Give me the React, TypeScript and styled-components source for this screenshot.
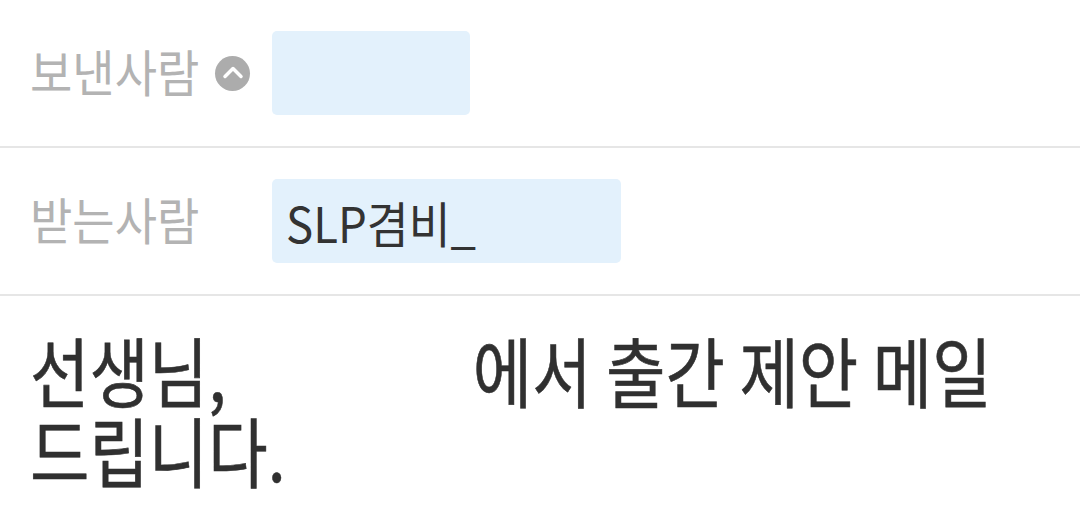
import React from "react";
import styled, { createGlobalStyle } from "styled-components";

const Global = createGlobalStyle`
  html, body { margin: 0; padding: 0; background: #ffffff; }
  body { font-family: "Noto Sans CJK KR", "Noto Sans", sans-serif; }
  #root { width: 1080px; height: 514px; overflow: hidden; }
`;

const Page = styled.div`
  width: 1080px;
  height: 514px;
  display: flex;
  flex-direction: column;
  background: #fff;
  overflow: hidden;
`;

const FieldRow = styled.div`
  height: 146px;
  display: grid;
  grid-template-columns: 242px auto;
  align-items: center;
  padding-left: 30px;
  border-bottom: 2px solid #e6e6e6;
`;

const LabelCell = styled.div`
  display: flex;
  align-items: center;
  gap: 1px;
`;

const Label = styled.span`
  display: inline-block;
  font-size: 50px;
  line-height: 1;
  color: #b3b3b3;
  white-space: nowrap;
  transform: scaleX(0.92);
  transform-origin: left center;
  margin-top: -6px;
`;

const ToggleIcon = styled.span`
  flex: none;
  width: 35px;
  height: 35px;
  border-radius: 50%;
  background: #acacac;
  display: inline-flex;
  align-items: center;
  justify-content: center;
`;

const InputBox = styled.div<{ $w: number }>`
  width: ${(p) => p.$w}px;
  height: 84px;
  border-radius: 5px;
  background: #e3f1fc;
  display: flex;
  align-items: center;
  padding-left: 14px;
  box-sizing: border-box;
`;

const InputText = styled.span`
  display: inline-block;
  font-size: 49px;
  line-height: 1;
  color: #333333;
  white-space: nowrap;
  transform: scaleX(0.93);
  transform-origin: left center;
`;

const Body = styled.div`
  padding: 33px 0 0 30px;
`;

const HeadLine = styled.p`
  margin: 0;
  width: 1180px;
  font-size: 76px;
  font-weight: 400;
  line-height: 80px;
  color: #303030;
  -webkit-text-stroke: 0.6px #303030;
  transform: scaleX(0.85);
  transform-origin: left top;
`;

const Redacted = styled.span`
  display: inline-block;
  width: 290px;
`;

export default function App() {
  return (
    <>
      <Global />
      <Page>
        <FieldRow>
          <LabelCell>
            <Label>보낸사람</Label>
            <ToggleIcon>
              <svg width="24" height="24" viewBox="0 0 24 24" fill="none">
                <path
                  d="M4 15.5 L12 7.5 L20 15.5"
                  stroke="#ffffff"
                  strokeWidth="3.5"
                  strokeLinecap="round"
                  strokeLinejoin="round"
                />
              </svg>
            </ToggleIcon>
          </LabelCell>
          <InputBox $w={198} />
        </FieldRow>
        <FieldRow>
          <LabelCell>
            <Label>받는사람</Label>
          </LabelCell>
          <InputBox $w={349}>
            <InputText>SLP겸비_</InputText>
          </InputBox>
        </FieldRow>
        <Body>
          <HeadLine>
            선생님,<Redacted />에서 출간 제안 메일 드립니다.
          </HeadLine>
        </Body>
      </Page>
    </>
  );
}
